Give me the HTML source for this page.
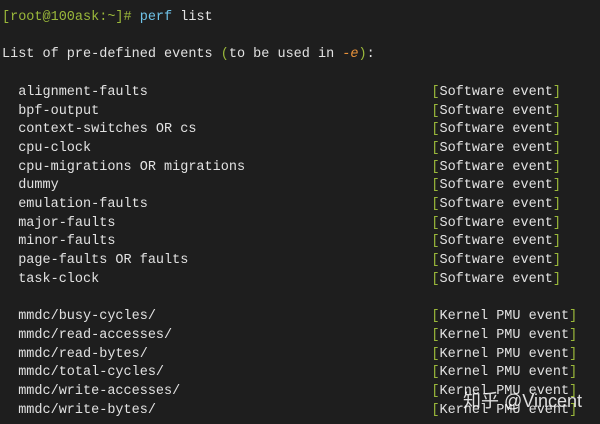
<!DOCTYPE html><html><head><style>
body{margin:0;width:600px;height:424px;background:#1e1e1e;overflow:hidden;position:relative}
pre{margin:0;position:absolute;left:2px;top:9px;font:13.5px/18.7px "Liberation Mono",monospace;color:#e2e2e2}
.g{color:#9ab83a}.b{color:#6fc3e8}.o{color:#e8913a;font-style:italic}
.wm{position:absolute;left:463px;top:387px;font:18px "Liberation Sans","Noto Sans CJK SC",sans-serif;color:rgba(255,255,255,.85)}
</style></head><body><pre><span class="g">[root@100ask:~]#</span> <span class="b">perf</span> list

List of pre-defined events <span class="g">(</span>to be used in <span class="o">-e</span><span class="g">)</span>:

  alignment-faults                                   <span class="g">[</span>Software event<span class="g">]</span>
  bpf-output                                         <span class="g">[</span>Software event<span class="g">]</span>
  context-switches OR cs                             <span class="g">[</span>Software event<span class="g">]</span>
  cpu-clock                                          <span class="g">[</span>Software event<span class="g">]</span>
  cpu-migrations OR migrations                       <span class="g">[</span>Software event<span class="g">]</span>
  dummy                                              <span class="g">[</span>Software event<span class="g">]</span>
  emulation-faults                                   <span class="g">[</span>Software event<span class="g">]</span>
  major-faults                                       <span class="g">[</span>Software event<span class="g">]</span>
  minor-faults                                       <span class="g">[</span>Software event<span class="g">]</span>
  page-faults OR faults                              <span class="g">[</span>Software event<span class="g">]</span>
  task-clock                                         <span class="g">[</span>Software event<span class="g">]</span>

  mmdc/busy-cycles/                                  <span class="g">[</span>Kernel PMU event<span class="g">]</span>
  mmdc/read-accesses/                                <span class="g">[</span>Kernel PMU event<span class="g">]</span>
  mmdc/read-bytes/                                   <span class="g">[</span>Kernel PMU event<span class="g">]</span>
  mmdc/total-cycles/                                 <span class="g">[</span>Kernel PMU event<span class="g">]</span>
  mmdc/write-accesses/                               <span class="g">[</span>Kernel PMU event<span class="g">]</span>
  mmdc/write-bytes/                                  <span class="g">[</span>Kernel PMU event<span class="g">]</span></pre>
<div class="wm">知乎 @Vincent</div>
</body></html>
